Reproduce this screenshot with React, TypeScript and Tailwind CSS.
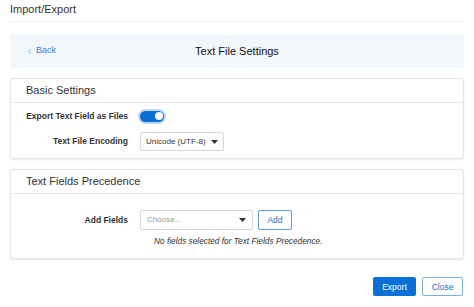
import { ChevronLeft } from "lucide-react";

function Caret() {
  return (
    <svg width="7" height="4" viewBox="0 0 7 4" className="shrink-0">
      <path d="M0 0h7L3.5 4z" fill="#333" />
    </svg>
  );
}

function Card({ title, children }: { title: string; children: React.ReactNode }) {
  return (
    <section className="rounded-[3px] border border-[#e1e5e9] bg-white shadow-[0_1px_2px_rgba(0,0,0,0.08)]">
      <div className="flex h-[24px] items-center border-b border-[#e6e9ec] px-[15px] text-[11px] text-[#333]">
        {title}
      </div>
      {children}
    </section>
  );
}

export default function App() {
  return (
    <div className="h-[307px] w-[474px] bg-white px-[10px] font-['Liberation_Sans',Arial,sans-serif] text-[#222]">
      <header className="flex h-[22px] items-center border-b border-[#eceef0] pb-[2px] text-[11px] text-[#333]">
        Import/Export
      </header>

      <div className="relative mt-[12px] flex h-[34px] items-center justify-center rounded-[2px] bg-[#f2f7fb] text-[11px] text-[#111]">
        <button className="absolute left-[15px] flex items-center gap-[2px] text-[9px] text-[#2f7fd6]">
          <ChevronLeft size={9} strokeWidth={1.5} />
          Back
        </button>
        Text File Settings
      </div>

      <div className="mt-[10px] flex flex-col gap-[10px]">
        <Card title="Basic Settings">
          <div className="grid grid-cols-[117px_1fr] items-center gap-x-[12px] pb-[7px] pt-[5px] text-[8.5px] whitespace-nowrap">
            <div className="text-right font-bold text-[#333]">Export Text Field as Files</div>
            <div className="flex h-[16px] items-center">
              <span className="flex h-[11px] w-[24px] items-center justify-end rounded-full bg-[#0b6fd8] px-[1.5px] ring-2 ring-[#bcd8f5]">
                <span className="h-[8px] w-[8px] rounded-full bg-white" />
              </span>
            </div>
            <div className="mt-[8px] text-right font-bold text-[#333]">Text File Encoding</div>
            <div className="mt-[8px] flex h-[19px] w-[84px] items-center justify-between rounded-[2px] border border-[#d5d9dd] px-[5px] text-[8px] text-[#333]">
              Unicode (UTF-8)
              <Caret />
            </div>
          </div>
        </Card>

        <Card title="Text Fields Precedence">
          <div className="grid grid-cols-[117px_1fr] items-center gap-x-[12px] pb-[11px] pt-[16px] text-[8.5px] whitespace-nowrap">
            <div className="text-right font-bold text-[#333]">Add Fields</div>
            <div className="flex items-center gap-[5px]">
              <div className="flex h-[20px] w-[113px] items-center justify-between rounded-[2px] border border-[#d5d9dd] px-[6px] text-[8px] text-[#9a9a9a]">
                Choose...
                <Caret />
              </div>
              <button className="flex h-[20px] w-[34px] items-center justify-center rounded-[2px] border border-[#5b9be0] text-[#1f6fc9]">
                Add
              </button>
            </div>
            <div />
            <div className="mt-[5px] pl-[14px] text-[8.3px] italic text-[#333]">
              No fields selected for Text Fields Precedence.
            </div>
          </div>
        </Card>
      </div>

      <div className="mt-[18px] flex justify-end gap-[6px] pr-[1px] text-[8.5px]">
        <button className="flex h-[19px] w-[43px] items-center justify-center rounded-[2px] bg-[#0b6fd8] text-white">
          Export
        </button>
        <button className="flex h-[19px] w-[41px] items-center justify-center rounded-[2px] border border-[#7aaee6] text-[#1f6fc9]">
          Close
        </button>
      </div>
    </div>
  );
}
